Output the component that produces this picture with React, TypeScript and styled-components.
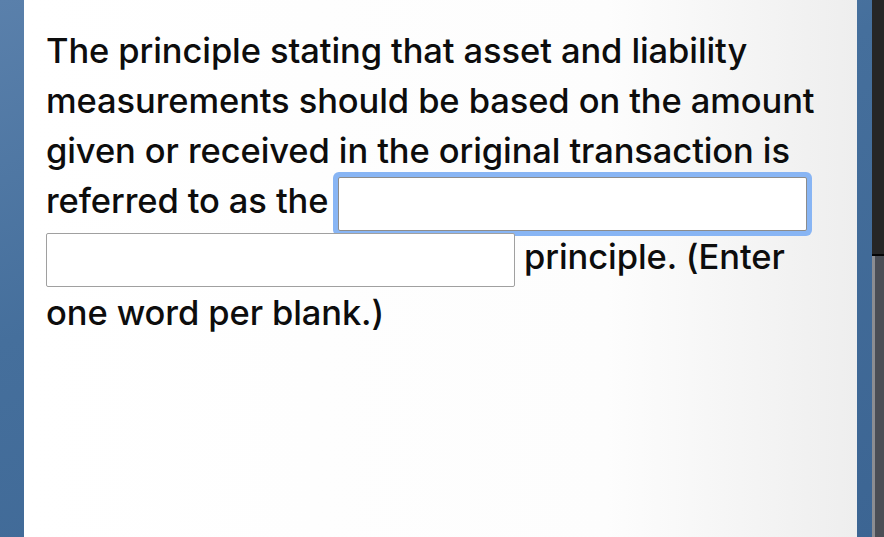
import React from "react";
import styled, { createGlobalStyle } from "styled-components";

const GlobalStyle = createGlobalStyle`
  html, body {
    margin: 0;
    padding: 0;
    width: 884px;
    height: 537px;
    overflow: hidden;
  }
  body {
    font-family: "Inter", "Noto Sans", "Liberation Sans", sans-serif;
  }
`;

const Desktop = styled.div`
  display: flex;
  width: 884px;
  height: 537px;
  background: linear-gradient(160deg, #5a80ab 0%, #456f9c 40%, #3c6593 100%);
`;

const Gutter = styled.div<{ $w: number }>`
  width: ${(p) => p.$w}px;
  flex-shrink: 0;
`;

const Sheet = styled.main`
  width: 833px;
  flex-shrink: 0;
  box-sizing: border-box;
  padding: 26px 10px 0 22px;
  background: linear-gradient(90deg, #ffffff 0%, #fdfdfd 70%, #eeeeee 100%);
`;

const Question = styled.p`
  margin: 0;
  width: 795px;
  font-size: 34.5px;
  font-weight: 500;
  line-height: 50px;
  color: #0d0d0d;
  letter-spacing: -0.1px;
`;

const Blank = styled.input<{ $focused?: boolean }>`
  display: inline-block;
  vertical-align: middle;
  box-sizing: border-box;
  width: 469px;
  height: 54px;
  margin: 1px 0;
  padding: 0 8px;
  border: 1.5px solid ${(p) => (p.$focused ? "#8c8c8c" : "#a0a0a0")};
  border-radius: 2px;
  background: #ffffff;
  font: inherit;
  outline: none;
  box-shadow: ${(p) => (p.$focused ? "0 0 0 5px #88b5f4" : "none")};
`;

const SideWindow = styled.div`
  display: flex;
  flex-direction: column;
  width: 12px;
  flex-shrink: 0;
`;

const SideTop = styled.div`
  height: 254px;
  background: #262626;
  border-bottom: 2px solid #050505;
`;

const SideBottom = styled.div`
  flex: 1;
  background: #4b4e55;
  border-left: 3px solid #8b8d92;
`;

export default function App() {
  return (
    <>
      <GlobalStyle />
      <Desktop>
        <Gutter $w={24} />
        <Sheet>
          <Question>
            The principle stating that asset and liability measurements should
            be based on the amount given or received in the original transaction
            is referred to as the <Blank $focused aria-label="blank 1" />{" "}
            <Blank aria-label="blank 2" /> principle. (Enter one word per
            blank.)
          </Question>
        </Sheet>
        <Gutter $w={15} />
        <SideWindow>
          <SideTop />
          <SideBottom />
        </SideWindow>
      </Desktop>
    </>
  );
}
